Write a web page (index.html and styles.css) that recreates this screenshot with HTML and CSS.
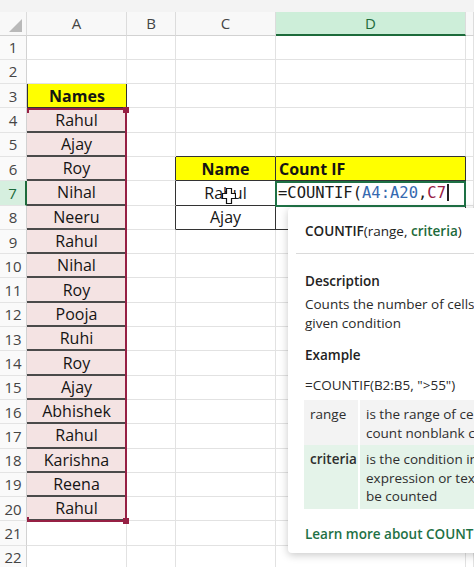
FILE: index.html
```html
<!DOCTYPE html>
<html lang="en">
<head>
    <meta charset="UTF-8">
    <title>COUNTIF</title>
    <link rel="stylesheet" href="styles.css">
</head>
<body>
<div class="sheet">
    <div class="top"></div>
    <div class="row head">
        <div class="h corner"><span class="tri"></span></div>
        <div class="h">A</div>
        <div class="h">B</div>
        <div class="h">C</div>
        <div class="h on">D</div>
        <div class="h"></div>
    </div>
    <div class="row"><div class="num">1</div><div class="c"></div><div class="c"></div><div class="c"></div><div class="c"></div><div class="c"></div></div>
    <div class="row"><div class="num">2</div><div class="c"></div><div class="c"></div><div class="c"></div><div class="c"></div><div class="c"></div></div>
    <div class="row"><div class="num">3</div><div class="c title">Names</div><div class="c"></div><div class="c"></div><div class="c"></div><div class="c"></div></div>
    <div class="row"><div class="num">4</div><div class="c name">Rahul</div><div class="c"></div><div class="c"></div><div class="c"></div><div class="c"></div></div>
    <div class="row"><div class="num">5</div><div class="c name">Ajay</div><div class="c"></div><div class="c edge-b"></div><div class="c edge-b"></div><div class="c"></div></div>
    <div class="row"><div class="num">6</div><div class="c name">Roy</div><div class="c edge-r"></div><div class="c tb title">Name</div><div class="c tb title left">Count IF</div><div class="c"></div></div>
    <div class="row"><div class="num on">7</div><div class="c name">Nihal</div><div class="c edge-r"></div><div class="c tb">Rahul</div><div class="c tb formula">=COUNTIF(<span class="ref-a">A4:A20</span>,<span class="ref-c">C7</span><span class="caret"></span></div><div class="c"></div></div>
    <div class="row"><div class="num">8</div><div class="c name">Neeru</div><div class="c edge-r"></div><div class="c tb">Ajay</div><div class="c tb"></div><div class="c"></div></div>
    <div class="row"><div class="num">9</div><div class="c name">Rahul</div><div class="c"></div><div class="c"></div><div class="c"></div><div class="c"></div></div>
    <div class="row"><div class="num">10</div><div class="c name">Nihal</div><div class="c"></div><div class="c"></div><div class="c"></div><div class="c"></div></div>
    <div class="row"><div class="num">11</div><div class="c name">Roy</div><div class="c"></div><div class="c"></div><div class="c"></div><div class="c"></div></div>
    <div class="row"><div class="num">12</div><div class="c name">Pooja</div><div class="c"></div><div class="c"></div><div class="c"></div><div class="c"></div></div>
    <div class="row"><div class="num">13</div><div class="c name">Ruhi</div><div class="c"></div><div class="c"></div><div class="c"></div><div class="c"></div></div>
    <div class="row"><div class="num">14</div><div class="c name">Roy</div><div class="c"></div><div class="c"></div><div class="c"></div><div class="c"></div></div>
    <div class="row"><div class="num">15</div><div class="c name">Ajay</div><div class="c"></div><div class="c"></div><div class="c"></div><div class="c"></div></div>
    <div class="row"><div class="num">16</div><div class="c name">Abhishek</div><div class="c"></div><div class="c"></div><div class="c"></div><div class="c"></div></div>
    <div class="row"><div class="num">17</div><div class="c name">Rahul</div><div class="c"></div><div class="c"></div><div class="c"></div><div class="c"></div></div>
    <div class="row"><div class="num">18</div><div class="c name">Karishna</div><div class="c"></div><div class="c"></div><div class="c"></div><div class="c"></div></div>
    <div class="row"><div class="num">19</div><div class="c name">Reena</div><div class="c"></div><div class="c"></div><div class="c"></div><div class="c"></div></div>
    <div class="row"><div class="num">20</div><div class="c name">Rahul</div><div class="c"></div><div class="c"></div><div class="c"></div><div class="c"></div></div>
    <div class="row"><div class="num">21</div><div class="c"></div><div class="c"></div><div class="c"></div><div class="c"></div><div class="c"></div></div>
    <div class="row"><div class="num">22</div><div class="c"></div><div class="c"></div><div class="c"></div><div class="c"></div><div class="c"></div></div>

    <!-- overlays -->
    <div class="range">
        <span class="hd tl"></span><span class="hd tr"></span>
        <span class="hd bl"></span><span class="hd br"></span>
    </div>
    <div class="active"></div>
    <svg class="pointer" width="14" height="16" viewBox="0 0 14 16">
        <path d="M4.5 0.5h5v5h4v5h-4v5h-5v-5h-4v-5h4z" fill="#fff" stroke="#111" stroke-width="1.2"/>
    </svg>

    <div class="tip">
        <div class="sig"><b>COUNTIF</b>(range, <b class="g">criteria</b>)</div>
        <div class="rule"></div>
        <div class="sec">Description</div>
        <div class="desc">Counts the number of cells that meet a<br>given condition</div>
        <div class="sec ex">Example</div>
        <div class="sample">=COUNTIF(B2:B5, "&gt;55")</div>
        <div class="args">
            <div class="arg">range</div>
            <div class="txt">is the range of cells in which to<br>count nonblank cells</div>
            <div class="arg alt"><b>criteria</b></div>
            <div class="txt alt">is the condition in the form of a number,<br>expression or text that defines which cells will<br>be counted</div>
        </div>
        <div class="more">Learn more about COUNTIF</div>
    </div>
</div>
</body>
</html>
```

FILE: styles.css
```css
* {
    padding: 0;
    margin: 0;
    box-sizing: border-box;
}

html, body {
    width: 474px;
    height: 567px;
    overflow: hidden;
    background: #fff;
}

.sheet {
    position: relative;
    width: 474px;
    font-family: "Open Sans", "Liberation Sans", sans-serif;
}

.top {
    height: 12px;
    background: #f3f3f3;
}

.row {
    display: grid;
    grid-template-columns: 27px 100px 49px 100px 190px 1fr;
    height: 24.3px;
}

.row.head {
    height: 23.5px;
}

/* column header */
.h {
    display: flex;
    align-items: center;
    justify-content: center;
    background: #f8f8f8;
    border-right: 1px solid #dcdcdc;
    border-bottom: 1px solid #d2d2d2;
    color: #454545;
    font-size: 15px;
}

.h.on {
    background: #cdeed9;
    color: #1d6b3b;
    border-bottom: 2px solid #1d6b3b;
}

.corner {
    position: relative;
}

.tri {
    position: absolute;
    right: 4px;
    bottom: 3px;
    width: 0;
    height: 0;
    border-left: 13px solid transparent;
    border-bottom: 13px solid #b9b9b9;
}

/* row numbers */
.num {
    display: flex;
    align-items: center;
    justify-content: center;
    background: #fafafa;
    border-right: 1px solid #d2d2d2;
    border-bottom: 1px solid #e4e4e4;
    color: #454545;
    font-size: 15px;
}

.num.on {
    background: #d6efdf;
    color: #1d6b3b;
    border-right: 2px solid #1d6b3b;
}

/* cells */
.c {
    display: flex;
    align-items: center;
    justify-content: center;
    border-right: 1px solid #e2e2e2;
    border-bottom: 1px solid #e2e2e2;
    color: #141414;
    font-size: 16px;
    white-space: nowrap;
    overflow: hidden;
}

.title {
    background: #ffff00;
    font-weight: 700;
    border: 1px solid #333;
    border-top: 0;
}

.name {
    background: #f4e3e3;
    border-bottom: 2px solid #4a4a4a;
    border-right-color: transparent;
}

.edge-b {
    border-bottom-color: #333;
}

.edge-r {
    border-right-color: #333;
}

.tb {
    border-right: 1px solid #333;
    border-bottom: 1px solid #333;
}

.title.tb {
    border-left: 0;
}

.left {
    justify-content: flex-start;
    padding-left: 3px;
}

.formula {
    justify-content: flex-start;
    padding-left: 2px;
    font-family: "DejaVu Sans Mono", "Liberation Mono", monospace;
    font-size: 15.5px;
    color: #1a1a1a;
    overflow: visible;
}

.ref-a {
    color: #3569b0;
}

.ref-c {
    color: #962044;
}

.caret {
    display: inline-block;
    width: 1.5px;
    height: 17px;
    margin-left: 1px;
    background: #222;
}

/* selected range A4:A20 */
.range {
    position: absolute;
    left: 27px;
    top: 107.5px;
    width: 100px;
    height: 414px;
    border: 2px solid #962044;
    border-left: 0;
}

.hd {
    position: absolute;
    background: #962044;
}

.hd.tl, .hd.bl {
    left: 0;
    width: 2px;
    height: 5px;
}

.hd.tl {
    top: -2px;
}

.hd.bl {
    bottom: -2px;
}

.hd.tr, .hd.br {
    right: -4px;
    width: 6px;
    height: 6px;
}

.hd.tr {
    top: -3px;
}

.hd.br {
    bottom: -4px;
}

.active {
    position: absolute;
    left: 275px;
    top: 180.5px;
    width: 191px;
    height: 26px;
    border: 2px solid #1e7145;
}

.pointer {
    position: absolute;
    left: 222px;
    top: 188px;
}

/* function tooltip */
.tip {
    position: absolute;
    left: 288px;
    top: 208px;
    width: 240px;
    height: 345px;
    padding: 13px 0 0 8px;
    background: #fff;
    border-radius: 4px;
    box-shadow: 0 2px 8px rgba(0, 0, 0, 0.22);
    font-size: 13.5px;
    color: #222;
    white-space: nowrap;
    overflow: hidden;
}

.sig, .sec, .desc, .sample, .more {
    padding-left: 9px;
    line-height: 20px;
}

.sig b {
    font-weight: 600;
}

.g {
    color: #1d6b3b;
}

.rule {
    height: 1px;
    margin-top: 12px;
    background: #dadada;
}

.sec {
    margin-top: 17px;
    font-weight: 600;
}

.sec.ex {
    margin-top: 12.5px;
}

.desc {
    margin-top: 3.5px;
    line-height: 19px;
    color: #2a2a2a;
}

.sample {
    margin-top: 10px;
    color: #2a2a2a;
}

.args {
    display: grid;
    grid-template-columns: 54px 1fr;
    column-gap: 2px;
    margin: 5px 0 0 8px;
    color: #2e2e2e;
}

.arg, .txt {
    padding: 5px 6px 3px 6px;
    line-height: 18.5px;
    background: #f3f3f3;
}

.arg {
    padding-right: 2px;
}

.arg.alt, .txt.alt {
    background: #e4f3e9;
}

.arg b {
    font-weight: 600;
}

.more {
    margin-top: 15px;
    font-weight: 600;
    color: #1e7145;
}
```
